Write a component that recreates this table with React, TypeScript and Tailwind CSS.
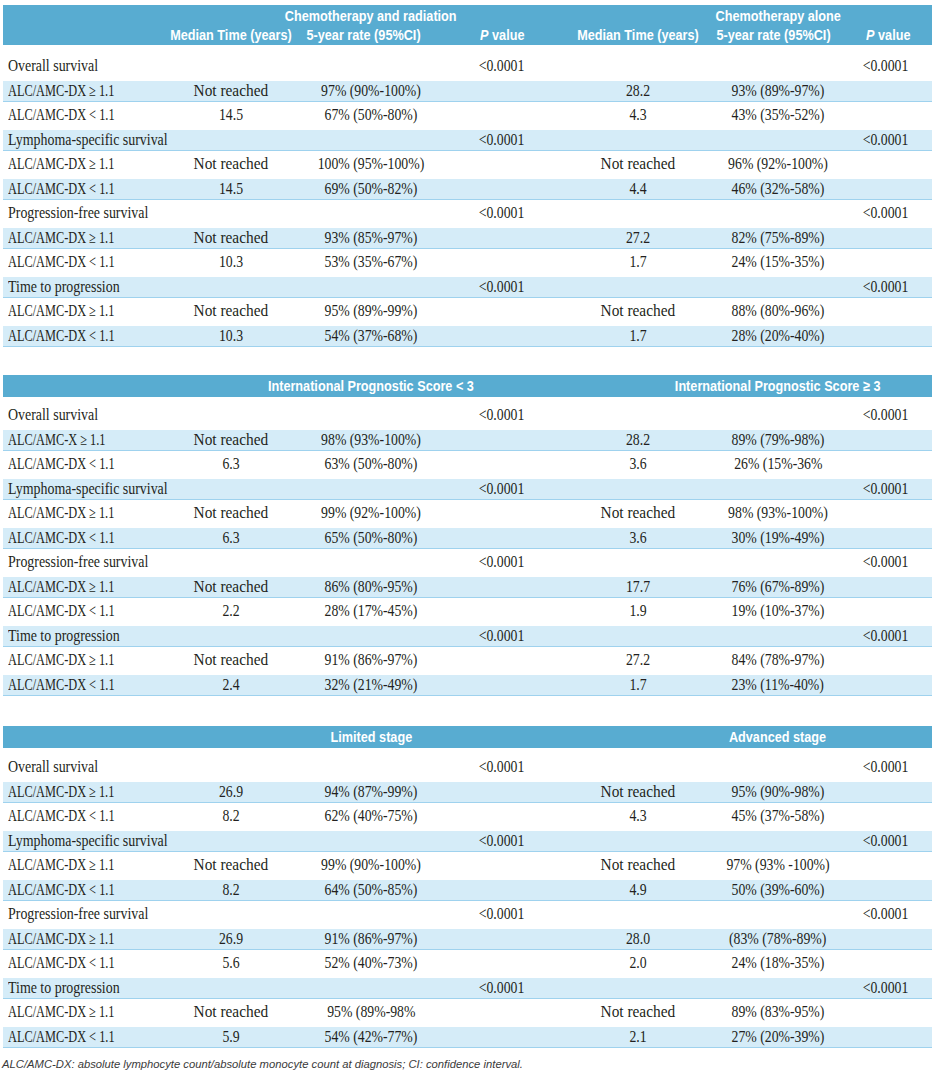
import React from "react";

type RowData = [string, string, string, string, string, string, string];

const GRID = "grid grid-cols-[162px_132px_148px_114px_158px_122px_93px]";
const SERIF = "font-['Liberation_Serif','Times_New_Roman',serif]";
const SANS = "font-['Liberation_Sans',Arial,sans-serif]";

const GE = "ALC/AMC-DX ≥ 1.1";
const LT = "ALC/AMC-DX < 1.1";
const P = "<0.0001";

const sec1: RowData[] = [
  ["Overall survival", "", "", P, "", "", P],
  [GE, "Not reached", "97% (90%-100%)", "", "28.2", "93% (89%-97%)", ""],
  [LT, "14.5", "67% (50%-80%)", "", "4.3", "43% (35%-52%)", ""],
  ["Lymphoma-specific survival", "", "", P, "", "", P],
  [GE, "Not reached", "100% (95%-100%)", "", "Not reached", "96% (92%-100%)", ""],
  [LT, "14.5", "69% (50%-82%)", "", "4.4", "46% (32%-58%)", ""],
  ["Progression-free survival", "", "", P, "", "", P],
  [GE, "Not reached", "93% (85%-97%)", "", "27.2", "82% (75%-89%)", ""],
  [LT, "10.3", "53% (35%-67%)", "", "1.7", "24% (15%-35%)", ""],
  ["Time to progression", "", "", P, "", "", P],
  [GE, "Not reached", "95% (89%-99%)", "", "Not reached", "88% (80%-96%)", ""],
  [LT, "10.3", "54% (37%-68%)", "", "1.7", "28% (20%-40%)", ""],
];

const sec2: RowData[] = [
  ["Overall survival", "", "", P, "", "", P],
  ["ALC/AMC-X ≥ 1.1", "Not reached", "98% (93%-100%)", "", "28.2", "89% (79%-98%)", ""],
  [LT, "6.3", "63% (50%-80%)", "", "3.6", "26% (15%-36%", ""],
  ["Lymphoma-specific survival", "", "", P, "", "", P],
  [GE, "Not reached", "99% (92%-100%)", "", "Not reached", "98% (93%-100%)", ""],
  [LT, "6.3", "65% (50%-80%)", "", "3.6", "30% (19%-49%)", ""],
  ["Progression-free survival", "", "", P, "", "", P],
  [GE, "Not reached", "86% (80%-95%)", "", "17.7", "76% (67%-89%)", ""],
  [LT, "2.2", "28% (17%-45%)", "", "1.9", "19% (10%-37%)", ""],
  ["Time to progression", "", "", P, "", "", P],
  [GE, "Not reached", "91% (86%-97%)", "", "27.2", "84% (78%-97%)", ""],
  [LT, "2.4", "32% (21%-49%)", "", "1.7", "23% (11%-40%)", ""],
];

const sec3: RowData[] = [
  ["Overall survival", "", "", P, "", "", P],
  [GE, "26.9", "94% (87%-99%)", "", "Not reached", "95% (90%-98%)", ""],
  [LT, "8.2", "62% (40%-75%)", "", "4.3", "45% (37%-58%)", ""],
  ["Lymphoma-specific survival", "", "", P, "", "", P],
  [GE, "Not reached", "99% (90%-100%)", "", "Not reached", "97% (93% -100%)", ""],
  [LT, "8.2", "64% (50%-85%)", "", "4.9", "50% (39%-60%)", ""],
  ["Progression-free survival", "", "", P, "", "", P],
  [GE, "26.9", "91% (86%-97%)", "", "28.0", "(83% (78%-89%)", ""],
  [LT, "5.6", "52% (40%-73%)", "", "2.0", "24% (18%-35%)", ""],
  ["Time to progression", "", "", P, "", "", P],
  [GE, "Not reached", "95% (89%-98%", "", "Not reached", "89% (83%-95%)", ""],
  [LT, "5.9", "54% (42%-77%)", "", "2.1", "27% (20%-39%)", ""],
];

function Cells({ r }: { r: RowData }) {
  return (
    <>
      {r.map((c, i) =>
        i === 0 ? (
          <div key={i} className="flex items-center pl-[5px] whitespace-nowrap">
            <span
              className={
                c.startsWith("ALC")
                  ? "inline-block origin-left scale-x-[0.77]"
                  : "inline-block origin-left scale-x-[0.87]"
              }
            >
              {c}
            </span>
          </div>
        ) : (
          <div key={i} className="flex items-center justify-center whitespace-nowrap">
            <span
              className={
                c === "Not reached"
                  ? "inline-block scale-x-[0.96]"
                  : "inline-block scale-x-[0.86]"
              }
            >
              {c}
            </span>
          </div>
        )
      )}
    </>
  );
}

function Row({ r, shaded }: { r: RowData; shaded: boolean }) {
  if (shaded) {
    return (
      <div className="h-[25px] pt-[3px] pb-[1px]">
        <div className={`${GRID} h-full bg-[#d5ecf8] border-b border-[#9fd2ee]`}>
          <Cells r={r} />
        </div>
      </div>
    );
  }
  return (
    <div className={`${GRID} h-[24px]`}>
      <Cells r={r} />
    </div>
  );
}

function Body({ rows }: { rows: RowData[] }) {
  return (
    <div className={`${SERIF} text-[16px] leading-[18px] text-[#231f20]`}>
      {rows.map((r, i) => (
        <Row key={i} r={r} shaded={i % 2 === 1} />
      ))}
    </div>
  );
}

function H({ children, extra = "" }: { children: React.ReactNode; extra?: string }) {
  return (
    <div className={`flex items-center justify-center whitespace-nowrap ${extra}`}>
      <span className="inline-block scale-x-[0.845]">{children}</span>
    </div>
  );
}

function SingleHeader({ left, right }: { left: string; right: string }) {
  return (
    <div className={`${GRID} h-[22px] bg-[#58acd1] ${SANS} font-bold text-[15px] leading-[18px] text-white`}>
      <div />
      <div />
      <H>{left}</H>
      <div />
      <div />
      <H>{right}</H>
      <div />
    </div>
  );
}

export default function App() {
  return (
    <div className="w-[937px] min-h-[1080px] bg-white pt-[5px]">
      <div className="ml-[3px] w-[929px]">
        {/* Section 1 header */}
        <div className={`h-[40px] bg-[#58acd1] ${SANS} font-bold text-[15px] leading-[18px] text-white flex flex-col pt-[1px]`}>
          <div className={`${GRID} h-[19px]`}>
            <div />
            <div />
            <H>Chemotherapy and radiation</H>
            <div />
            <div />
            <H>Chemotherapy alone</H>
            <div />
          </div>
          <div className={`${GRID} h-[19px]`}>
            <div />
            <H>Median Time (years)</H>
            <H extra="pr-[15px]">5-year rate (95%CI)</H>
            <H>
              <i>P</i> value
            </H>
            <H>Median Time (years)</H>
            <H extra="pr-[9px]">5-year rate (95%CI)</H>
            <H extra="pl-[6px]">
              <i>P</i> value
            </H>
          </div>
        </div>
        <div className="h-[9px]" />
        <Body rows={sec1} />

        <div className="h-[27px]" />
        <SingleHeader left="International Prognostic Score < 3" right="International Prognostic Score ≥ 3" />
        <div className="h-[6px]" />
        <Body rows={sec2} />

        <div className="h-[29px]" />
        <SingleHeader left="Limited stage" right="Advanced stage" />
        <div className="h-[7px]" />
        <Body rows={sec3} />

        <div className={`mt-[7px] -ml-[1px] ${SANS} italic text-[11.25px] leading-[16px] text-[#3a3a3a] whitespace-nowrap`}>
          ALC/AMC-DX: absolute lymphocyte count/absolute monocyte count at diagnosis; CI: confidence interval.
        </div>
      </div>
    </div>
  );
}
